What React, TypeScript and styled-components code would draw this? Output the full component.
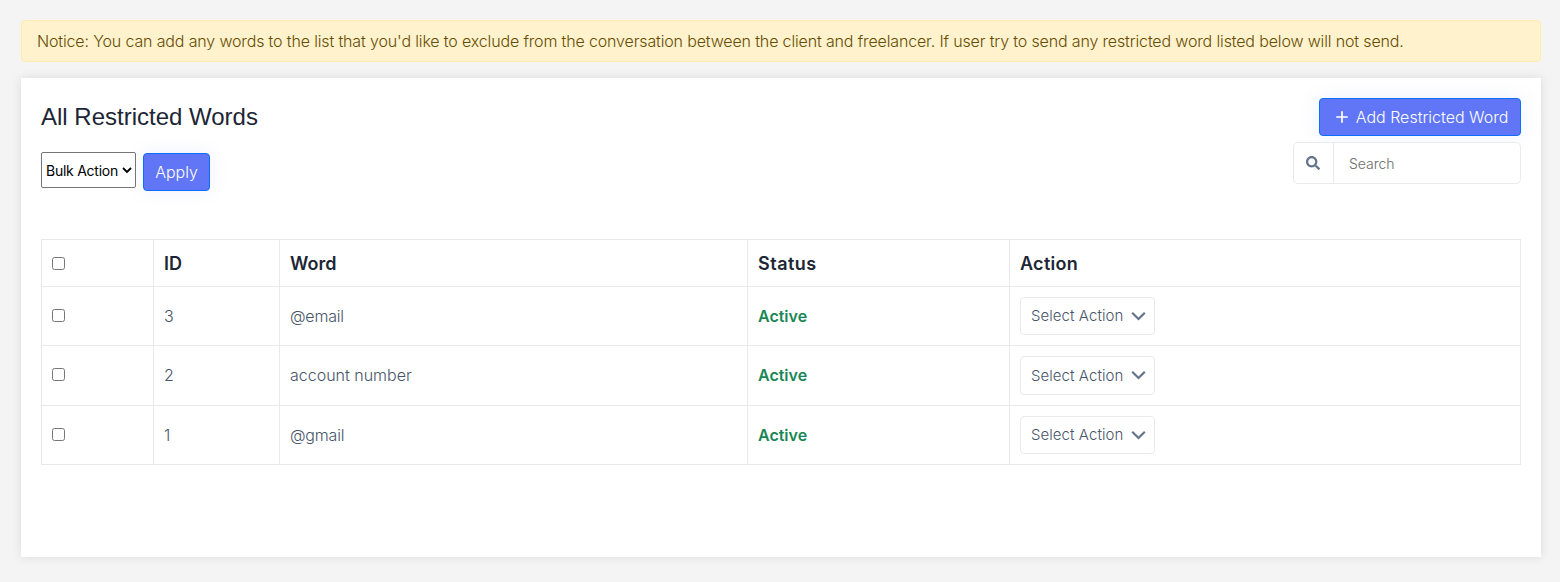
import React from "react";
import styled, { createGlobalStyle } from "styled-components";

const GlobalStyle = createGlobalStyle`
  *, *::before, *::after { box-sizing: border-box; }
  body {
    margin: 0;
    background: #f4f4f4;
    color: #475569;
    font-family: Inter, "Liberation Sans", sans-serif;
    font-size: 16px;
    font-weight: 300;
    line-height: 24px;
  }
`;

const Page = styled.main`
  height: 582px;
  padding: 20px 19px 25px 21px;
  display: flex;
  flex-direction: column;
  gap: 16px;
`;

const Notice = styled.div`
  height: 42px;
  padding: 8px 15px;
  border: 1px solid #ffebb0;
  border-radius: 4px;
  background: #fff2cd;
  color: #664d03;
  white-space: nowrap;
`;

const NoticeText = styled.span`
  letter-spacing: -0.147px;
`;

const Card = styled.section`
  flex: 1;
  padding: 20px;
  background: #fff;
  box-shadow: 0 0 10px rgba(0, 0, 0, 0.1);
`;

const Header = styled.header`
  height: 141px;
  display: flex;
  justify-content: space-between;
`;

const HeaderLeft = styled.div`
  display: flex;
  flex-direction: column;
  gap: 16px;
`;

const HeaderRight = styled.div`
  display: flex;
  flex-direction: column;
  align-items: flex-end;
  gap: 6px;
`;

const Title = styled.h2`
  margin: 0;
  height: 38px;
  font: 400 24px/38px "Liberation Sans", Arial, sans-serif;
  color: #1d2635;
  white-space: nowrap;
`;

const BulkBar = styled.div`
  display: flex;
  align-items: flex-start;
  gap: 7px;
`;

const BulkSelect = styled.button`
  width: 95px;
  height: 36px;
  padding: 1px 3px 0 4px;
  display: flex;
  align-items: center;
  justify-content: space-between;
  border: 1px solid #767676;
  border-radius: 2px;
  background: #fff;
  color: #000;
  font: 400 14px/20px Inter, sans-serif;
  letter-spacing: -0.25px;
  white-space: nowrap;
`;

const PrimaryButton = styled.button<{ $width: number }>`
  width: ${(p) => p.$width}px;
  height: 38px;
  padding: 0;
  display: flex;
  align-items: center;
  justify-content: center;
  gap: 8px;
  border: 1px solid #0d6efd;
  border-radius: 4px;
  background: #6176f6;
  color: #fff;
  font: 300 16px/24px Inter, sans-serif;
  white-space: nowrap;
  box-shadow: 0 0 20px rgba(97, 118, 246, 0.1);
`;

const ApplyButton = styled(PrimaryButton)`
  margin-top: 1px;
`;

const AddButton = styled(PrimaryButton)`
  padding-left: 4px;
`;

const SearchBox = styled.label`
  width: 228px;
  height: 42px;
  display: flex;
  border: 1px solid #e9eaec;
  border-radius: 5px;
  background: #fff;
`;

const SearchIcon = styled.span`
  width: 40px;
  padding: 13px 12px;
  display: flex;
  border-right: 1px solid #e9eaec;
`;

const SearchInput = styled.input`
  flex: 1;
  min-width: 0;
  padding: 2px 15px 0;
  border: 0;
  outline: 0;
  background: transparent;
  font: 300 14px/20px Inter, sans-serif;
  letter-spacing: -0.05px;
  &::placeholder { color: #6c6c6c; opacity: 1; }
`;

const Table = styled.table`
  width: 1480px;
  table-layout: fixed;
  border-collapse: separate;
  border-spacing: 0;
  border: solid #e9e9ec;
  border-width: 1px 0 0 1px;
`;

const Row = styled.tr<{ $height: number }>`
  height: ${(p) => p.$height}px;
`;

const Cell = styled.td`
  padding: 0 10px;
  border: solid #e9e9ec;
  border-width: 0 1px 1px 0;
  vertical-align: middle;
`;

const TextCell = styled(Cell)`
  padding: 17px 10px 0;
  vertical-align: top;
`;

const HeadCell = styled(Cell).attrs({ as: "th" })`
  padding-top: 2px;
  text-align: left;
  font-size: 18px;
  font-weight: 600;
  color: #1d2635;
`;

const Label = styled.span<{ $spacing?: number }>`
  letter-spacing: ${(p) => p.$spacing ?? 0}px;
`;

const Check = styled.input.attrs({ type: "checkbox" })`
  display: block;
  width: 13px;
  height: 13px;
  margin: 0 0 2px;
`;

const Status = styled.span`
  color: #198754;
  font-weight: 600;
`;

const ActionSelect = styled.button<{ $height: number }>`
  width: 135px;
  height: ${(p) => p.$height}px;
  padding: 0 8px 1px 10px;
  display: flex;
  align-items: center;
  justify-content: space-between;
  border: 1px solid #e9eaec;
  border-radius: 4px;
  background: #fff;
  color: #475569;
  font: 300 15px/23px Inter, sans-serif;
  letter-spacing: 0.06px;
  white-space: nowrap;
`;

const rows = [
  { id: 3, word: "@email", height: 59, spacing: -0.2 },
  { id: 2, word: "account number", height: 60, spacing: 0 },
  { id: 1, word: "@gmail", height: 59, spacing: -0.2 },
];

const Plus = () => (
  <svg width="12" height="12" viewBox="0 0 12 12" fill="none" stroke="#fff" strokeWidth="1.7" strokeLinecap="round">
    <path d="M6 .9v10.200M.9 6h10.200" />
  </svg>
);

const Magnifier = () => (
  <svg width="14" height="14" viewBox="0 0 512 512" fill="#64748b">
    <path d="M505 442.700 405.300 343c-4.500-4.500-10.600-7-17-7H372c27.600-35.300 44-79.700 44-128C416 93.100 322.900 0 208 0S0 93.100 0 208s93.100 208 208 208c48.300 0 92.700-16.400 128-44v16.300c0 6.400 2.500 12.500 7 17l99.700 99.700c9.400 9.400 24.600 9.400 33.900 0l28.300-28.300c9.400-9.400 9.400-24.600.1-34zM208 336c-70.700 0-128-57.200-128-128 0-70.700 57.200-128 128-128 70.700 0 128 57.200 128 128 0 70.700-57.200 128-128 128z" />
  </svg>
);

const SmallChevron = () => (
  <svg width="10" height="7" viewBox="0 0 10 7" fill="none" stroke="#000" strokeWidth="1.8">
    <path d="M1 1l4 4 4-4" />
  </svg>
);

const Chevron = () => (
  <svg width="15" height="10" viewBox="0 0 15 10" fill="none" stroke="#64748b" strokeWidth="2.200">
    <path d="M1.200 1.700l6.300 6.300 6.300-6.300" />
  </svg>
);

export default function App() {
  return (
    <>
      <GlobalStyle />
      <Page>
        <Notice>
          <NoticeText>
            Notice: You can add any words to the list that you'd like to exclude from the conversation between the
            client and freelancer. If user try to send any restricted word listed below will not send.
          </NoticeText>
        </Notice>
        <Card>
          <Header>
            <HeaderLeft>
              <Title>All Restricted Words</Title>
              <BulkBar>
                <BulkSelect>
                  Bulk Action
                  <SmallChevron />
                </BulkSelect>
                <ApplyButton $width={67}>Apply</ApplyButton>
              </BulkBar>
            </HeaderLeft>
            <HeaderRight>
              <AddButton $width={202}>
                <Plus />
                <Label>Add Restricted Word</Label>
              </AddButton>
              <SearchBox>
                <SearchIcon>
                  <Magnifier />
                </SearchIcon>
                <SearchInput placeholder="Search" />
              </SearchBox>
            </HeaderRight>
          </Header>
          <Table>
            <colgroup>
              <col style={{ width: 112 }} />
              <col style={{ width: 126 }} />
              <col style={{ width: 468 }} />
              <col style={{ width: 262 }} />
              <col />
            </colgroup>
            <thead>
              <Row $height={47}>
                <HeadCell><Check /></HeadCell>
                <HeadCell>ID</HeadCell>
                <HeadCell>Word</HeadCell>
                <HeadCell><Label $spacing={0.5}>Status</Label></HeadCell>
                <HeadCell><Label $spacing={0.3}>Action</Label></HeadCell>
              </Row>
            </thead>
            <tbody>
              {rows.map((r) => (
                <Row key={r.id} $height={r.height}>
                  <Cell><Check /></Cell>
                  <TextCell>{r.id}</TextCell>
                  <TextCell><Label $spacing={r.spacing}>{r.word}</Label></TextCell>
                  <TextCell><Status>Active</Status></TextCell>
                  <Cell>
                    <ActionSelect $height={r.height - 21}>
                      Select Action
                      <Chevron />
                    </ActionSelect>
                  </Cell>
                </Row>
              ))}
            </tbody>
          </Table>
        </Card>
      </Page>
    </>
  );
}
